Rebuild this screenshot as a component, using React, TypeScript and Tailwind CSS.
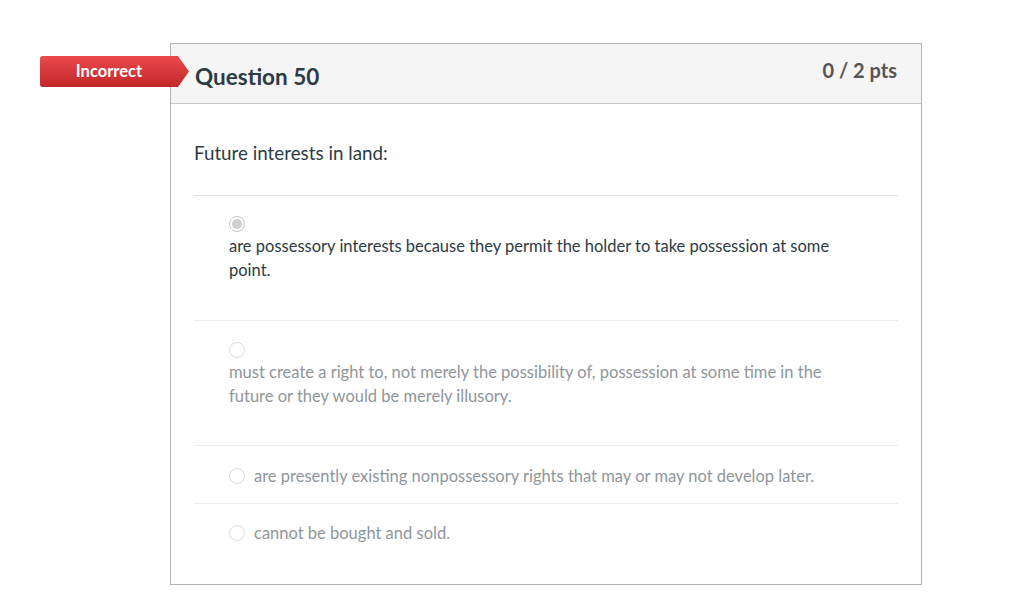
import React from "react";

function Radio({ checked }: { checked?: boolean }) {
  return (
    <span
      className={
        "flex h-[16px] w-[16px] shrink-0 items-center justify-center rounded-full border " +
        (checked ? "border-[#c4c4c4] bg-white" : "border-[#dcdcdc] bg-white")
      }
    >
      {checked && <span className="h-[10px] w-[10px] rounded-full bg-[#cfcfcf]" />}
    </span>
  );
}

export default function App() {
  return (
    <div
      className="h-[612px] w-full bg-white pt-[43px]"
      style={{ fontFamily: "Lato, 'Open Sans', sans-serif" }}
    >
      <div className="relative ml-[170px] h-[542px] w-[752px] border border-[#b4b4b4] bg-white">
        <div className="absolute left-[-131px] top-[12px] z-10 flex h-[31px] w-[149px] items-center bg-gradient-to-b from-[#ea4a4c] to-[#c2262a] pr-[11px] shadow-[0_1px_1px_rgba(0,0,0,0.25)] [clip-path:polygon(0_0,calc(100%-11px)_0,100%_50%,calc(100%-11px)_100%,0_100%)] rounded-l-[3px]">
          <span className="w-full text-center text-[16.5px] font-bold leading-none text-white">
            Incorrect
          </span>
        </div>

        <div className="flex h-[60px] items-start justify-between border-b border-[#c7c7c7] bg-[#f5f5f5] px-[24px]">
          <h2 className="pt-[19px] text-[22.5px] font-bold leading-[28px] text-[#2d3b45]">
            Question 50
          </h2>
          <span className="pt-[14px] text-[20px] font-bold leading-[24px] text-[#555555]">
            0 / 2 pts
          </span>
        </div>

        <div className="px-[23px]">
          <div className="h-[92px] border-b border-[#e2e2e2] pt-[35px] text-[18.8px] leading-[27px] text-[#2d3b45]">
            Future interests in land:
          </div>

          <div className="h-[125px] border-b border-[#ececec] pl-[35px] pt-[20px]">
            <Radio checked />
            <p className="mt-[2px] text-[16.5px] leading-[24px] text-[#2d3b45]">
              are possessory interests because they permit the holder to take possession at some
              <br />
              point.
            </p>
          </div>

          <div className="h-[125px] border-b border-[#ececec] pl-[35px] pt-[21px]">
            <Radio />
            <p className="mt-[2px] text-[16.5px] leading-[24px] text-[#8f969b]">
              must create a right to, not merely the possibility of, possession at some time in the
              <br />
              future or they would be merely illusory.
            </p>
          </div>

          <div className="flex h-[58px] items-center gap-[9px] border-b border-[#ececec] pl-[35px] pt-[2px]">
            <Radio />
            <span className="text-[16.5px] leading-[24px] text-[#8f969b]">
              are presently existing nonpossessory rights that may or may not develop later.
            </span>
          </div>

          <div className="flex h-[58px] items-center gap-[9px] pl-[35px]">
            <Radio />
            <span className="text-[16.5px] leading-[24px] text-[#8f969b]">
              cannot be bought and sold.
            </span>
          </div>
        </div>
      </div>
    </div>
  );
}
